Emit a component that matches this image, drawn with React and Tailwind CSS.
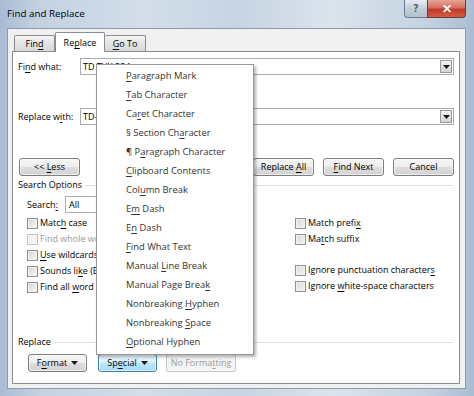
import React from "react";

const U = ({ children }) => (
  <span className="underline decoration-[1px] underline-offset-[2px]">{children}</span>
);

function Btn({ children, className = "", variant = "normal", arrow }) {
  const look =
    variant === "hot"
      ? "border-[#3c7fb1] bg-[linear-gradient(#eaf6fd_0%,#d9f0fc_50%,#bee6fd_50%,#a7d9f5_100%)] text-black"
      : variant === "disabled"
      ? "border-[#c0c4c7] bg-[#f4f4f4] text-[#9a9a9a]"
      : "border-[#7d7d7d] bg-[linear-gradient(#f6f6f6_0%,#ededed_50%,#dedede_50%,#d2d2d2_100%)] text-black";
  return (
    <div
      className={`flex h-[18px] items-center justify-center gap-[4px] rounded-[3px] border shadow-[inset_0_0_0_1px_rgba(255,255,255,0.6)] ${look} ${className}`}
    >
      <span className="whitespace-pre">{children}</span>
      {arrow && <Arrow />}
    </div>
  );
}

function Check({ children, disabled }) {
  return (
    <div className={`flex h-[16px] items-center gap-[2px] ${disabled ? "text-[#9a9a9a]" : "text-black"}`}>
      <div
        className={`h-[11px] w-[11px] border ${
          disabled
            ? "border-[#c4c4c4] bg-[#f4f4f4]"
            : "border-[#8e8f8f] bg-[linear-gradient(135deg,#d6d6d6,#f7f7f7)] shadow-[inset_0_0_0_1px_#f2f2f2]"
        }`}
      />
      <span className="whitespace-pre">{children}</span>
    </div>
  );
}

function Arrow() {
  return (
    <svg width="7" height="4" viewBox="0 0 7 4">
      <path d="M0 0h7L3.5 4z" fill="#1a1a1a" />
    </svg>
  );
}

function Combo({ text, className = "" }) {
  return (
    <div className={`flex h-[17px] items-center border border-[#a9acb2] bg-white ${className}`}>
      <span className="flex-1 whitespace-nowrap pl-[2px]">{text}</span>
      <div className="mr-[1px] flex h-[13px] w-[12px] items-center justify-center border border-[#9a9a9a] bg-[linear-gradient(#f2f2f2,#d4d4d4)]">
        <Arrow />
      </div>
    </div>
  );
}

function Group({ children }) {
  return (
    <div className="mt-[2px] flex h-[14px] items-center pl-[5px] pr-[6px]">
      <span>{children}</span>
      <div className="ml-[3px] h-px flex-1 bg-[#dde2e6]" />
    </div>
  );
}

const menuItems = [
  [<U key="u">P</U>, "aragraph Mark"],
  [<U key="u">T</U>, "ab Character"],
  ["Ca", <U key="u">r</U>, "et Character"],
  ["§ Section Ch", <U key="u">a</U>, "racter"],
  ["¶ P", <U key="u">a</U>, "ragraph Character"],
  [<U key="u">C</U>, "lipboard Contents"],
  ["Col", <U key="u">u</U>, "mn Break"],
  ["E", <U key="u">m</U>, " Dash"],
  ["E", <U key="u">n</U>, " Dash"],
  [<U key="u">F</U>, "ind What Text"],
  ["Manual ", <U key="u">L</U>, "ine Break"],
  ["Manual Page Brea", <U key="u">k</U>],
  ["Nonbreaking ", <U key="u">H</U>, "yphen"],
  ["Nonbreaking ", <U key="u">S</U>, "pace"],
  [<U key="u">O</U>, "ptional Hyphen"],
];

export default function App() {
  return (
    <div className="relative h-[396px] w-[474px] overflow-hidden bg-[linear-gradient(90deg,#a9bcd2_0%,#c3d1e2_8%,#d3deea_30%,#c7d4e3_50%,#dbe3ed_70%,#c4d2e1_90%,#aabdd3_100%)] font-['Open_Sans',sans-serif] text-[9px] text-black">
      {/* title bar */}
      <div className="flex h-[28px] items-start">
        <div className="pl-[7px] pt-[7px] text-[9.8px] text-black">Find and Replace</div>
        <div className="ml-auto mr-[8px] flex h-[18px]">
          <div className="flex w-[23px] items-center justify-center rounded-bl-[4px] border border-r-0 border-t-0 border-[#6f7b8a] bg-[linear-gradient(#e6ecf3,#c2cedb_50%,#b3c1d1)] text-[10px] font-bold text-[#4a5563]">
            ?
          </div>
          <div className="flex w-[39px] items-center justify-center rounded-br-[4px] border border-t-0 border-[#6b3b34] bg-[linear-gradient(#e8a597,#d4705f_45%,#c0392b_55%,#d25a45)] text-[12px] font-bold text-white">
            ✕
          </div>
        </div>
      </div>

      {/* dialog body */}
      <div className="ml-[7px] mr-[8px] h-[361px] border border-[#8d9db0] bg-[#f0f0f0] pt-[3px]">
        {/* tabs */}
        <div className="relative z-10 flex h-[19px] items-end pl-[6px]">
          <div className="flex h-[16px] w-[41px] items-center justify-center rounded-t-[2px] border border-b-0 border-[#898c95] bg-[linear-gradient(#f3f3f3,#e3e3e3_50%,#dadada)]">
            <span>
              Fin<U>d</U>
            </span>
          </div>
          <div className="-mb-[1px] flex h-[20px] w-[50px] items-center justify-center rounded-t-[2px] border border-b-0 border-[#898c95] bg-white">
            <span>
              Re<U>p</U>lace
            </span>
          </div>
          <div className="flex h-[16px] w-[41px] items-center justify-center rounded-t-[2px] border border-b-0 border-l-0 border-[#898c95] bg-[linear-gradient(#f3f3f3,#e3e3e3_50%,#dadada)]">
            <span className="whitespace-pre">
              <U>G</U>o To
            </span>
          </div>
        </div>

        {/* tab panel */}
        <div className="ml-[4px] mr-[5px] flex h-[333px] flex-col border border-[#898c95] bg-white">
          <div className="mt-[6px] flex items-center pl-[5px]">
            <span className="w-[62px] whitespace-pre">
              Fi<U>n</U>d what:
            </span>
            <Combo text="TD TVK 334" className="w-[374px]" />
          </div>
          <div className="mt-[33px] flex items-center pl-[5px]">
            <span className="w-[62px] whitespace-pre">
              Replace w<U>i</U>th:
            </span>
            <Combo text="TD-TVK 334" className="w-[374px]" />
          </div>

          <div className="mt-[33px] flex items-center justify-between pl-[6px] pr-[5px]">
            <Btn className="w-[61px]">
              &lt;&lt; <U>L</U>ess
            </Btn>
            <div className="flex gap-[9px]">
              <Btn className="w-[61px]">
                <U>R</U>eplace
              </Btn>
              <Btn className="w-[61px]">
                Replace <U>A</U>ll
              </Btn>
              <Btn className="w-[61px]">
                <U>F</U>ind Next
              </Btn>
              <Btn className="w-[61px]">Cancel</Btn>
            </div>
          </div>

          <Group>Search Options</Group>

          <div className="mt-[4px] flex items-center pl-[14px]">
            <span className="w-[38px]">
              Search<U>:</U>
            </span>
            <div className="flex h-[17px] w-[110px] items-center border border-[#a9acb2] bg-white pl-[3px]">All</div>
          </div>

          <div className="mt-[2px] flex pl-[14px]">
            <div className="flex w-[268px] flex-col">
              <Check>
                Matc<U>h</U> case
              </Check>
              <Check disabled>
                Find whole words onl<U>y</U>
              </Check>
              <Check>
                <U>U</U>se wildcards
              </Check>
              <Check>
                Sounds li<U>k</U>e (English)
              </Check>
              <Check>
                Find all <U>w</U>ord forms (English)
              </Check>
            </div>
            <div className="flex flex-col">
              <Check>
                Match prefi<U>x</U>
              </Check>
              <Check>
                Ma<U>t</U>ch suffix
              </Check>
              <div className="h-[15px]" />
              <Check>
                Ignore punctuation character<U>s</U>
              </Check>
              <Check>
                Ignore <U>w</U>hite-space characters
              </Check>
            </div>
          </div>

          <div className="mt-[38px]">
            <Group>Replace</Group>
          </div>

          <div className="mt-[5px] flex items-center pl-[15px]">
            <Btn className="w-[59px]" arrow>
              F<U>o</U>rmat
            </Btn>
            <Btn variant="hot" className="ml-[11px] w-[59px]" arrow>
              Sp<U>e</U>cial
            </Btn>
            <Btn variant="disabled" className="ml-[9px] w-[70px]">
              No Forma<U>t</U>ting
            </Btn>
          </div>
        </div>
      </div>

      {/* Special menu */}
      <div className="absolute left-[96px] top-[64px] w-[158px] border border-[#979797] bg-white py-[2px] text-[9.4px] text-[#333] shadow-[2px_2px_3px_rgba(0,0,0,0.3)]">
        {menuItems.map((parts, i) => (
          <div key={i} className="flex h-[19px] items-center pl-[29px]">
            <span className="whitespace-pre">{parts}</span>
          </div>
        ))}
      </div>
    </div>
  );
}
